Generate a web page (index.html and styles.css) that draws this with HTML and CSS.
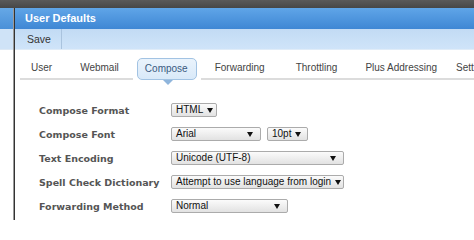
FILE: index.html
```html
<!DOCTYPE html>
<html>
<head>
<meta charset="utf-8">
<link rel="stylesheet" href="styles.css">
</head>
<body>
<div class="topbar"></div>
<div class="desk">
  <div class="backwin">
    <div class="back-title"></div>
    <div class="back-tool"></div>
  </div>
  <div class="win">
    <div class="titlebar">User Defaults</div>
    <div class="toolbar"><span class="tool-btn">Save</span></div>
    <div class="tabs">
      <span class="tab tab-first">User</span>
      <span class="tab">Webmail</span>
      <span class="tab active">Compose</span>
      <span class="tab tab-fwd">Forwarding</span>
      <span class="tab">Throttling</span>
      <span class="tab tab-plus">Plus Addressing</span>
      <span class="tab">Settings</span>
    </div>
    <div class="form">
      <div class="label">Compose Format</div>
      <div class="field"><div class="sel w-html"><span class="sel-text">HTML</span><span class="arrow"></span></div></div>

      <div class="label">Compose Font</div>
      <div class="field"><div class="sel w-arial"><span class="sel-text">Arial</span><span class="arrow"></span></div><div class="sel w-size"><span class="sel-text">10pt</span><span class="arrow"></span></div></div>

      <div class="label">Text Encoding</div>
      <div class="field"><div class="sel w-wide"><span class="sel-text">Unicode (UTF-8)</span><span class="arrow"></span></div></div>

      <div class="label">Spell Check Dictionary</div>
      <div class="field"><div class="sel w-wide"><span class="sel-text">Attempt to use language from login</span><span class="arrow"></span></div></div>

      <div class="label">Forwarding Method</div>
      <div class="field"><div class="sel w-normal"><span class="sel-text">Normal</span><span class="arrow"></span></div></div>
    </div>
  </div>
</div>
</body>
</html>
```
FILE: styles.css
```css
html, body {
  margin: 0;
  padding: 0;
}
body {
  width: 474px;
  height: 220px;
  overflow: hidden;
  background: #ffffff;
  font-family: "Liberation Sans", Arial, sans-serif;
}
.topbar {
  height: 8px;
  background: linear-gradient(#5a5a5a, #474747);
}
.desk {
  display: flex;
  height: 212px;
}
.backwin {
  width: 14px;
  flex: none;
}
.back-title {
  height: 21px;
  background: linear-gradient(#66a8e6, #4a90d8);
}
.back-tool {
  height: 20px;
  background: #cfe3f7;
  border-bottom: 1px solid #dde9f5;
}
.win {
  flex: 1;
  border-left: 1px solid #333333;
  box-shadow: -1px 0 0 #9a9a9a;
  min-width: 0;
  overflow: hidden;
}
.titlebar {
  height: 21px;
  line-height: 21px;
  padding-left: 10px;
  background: linear-gradient(#5fa5e8, #3f87d4);
  color: #ffffff;
  font-weight: bold;
  font-size: 11px;
}
.toolbar {
  height: 20px;
  display: flex;
  background: linear-gradient(#c2dbf4, #cfe4f9);
  border-bottom: 1px solid #e0ecf8;
}
.tool-btn {
  padding: 0 10px 0 12px;
  line-height: 20px;
  font-size: 10.5px;
  color: #333333;
  border-right: 1px solid #a9c3de;
}
.tabs {
  display: flex;
  margin-top: 8px;
  height: 22px;
  padding-left: 5px;
  white-space: nowrap;
}
.tab {
  padding: 0 14px;
  line-height: 20px;
  font-size: 10px;
  color: #444444;
  border-bottom: 2px solid #dcdcdc;
}
.tab-first {
  padding-left: 11px;
}
.tab-fwd {
  padding-right: 17px;
}
.tab-plus {
  padding-right: 5px;
}
.tab.active {
  position: relative;
  margin: 0 4px;
  padding: 0 8px 0 7px;
  border: 1px solid #a2c3e3;
  border-radius: 5px;
  background: linear-gradient(#eaf3fc, #d9e9f9);
  color: #3a5a80;
  line-height: 20px;
}
.tab.active::after {
  content: "";
  position: absolute;
  left: 25px;
  top: 21px;
  border-left: 5px solid transparent;
  border-right: 5px solid transparent;
  border-top: 5px solid #8fb5dc;
}
.form {
  display: grid;
  grid-template-columns: 132px auto;
  grid-auto-rows: 14px;
  row-gap: 10px;
  padding: 23px 0 0 24px;
}
.label {
  align-self: center;
  font-family: "DejaVu Sans", Verdana, sans-serif;
  font-weight: bold;
  font-size: 9.5px;
  color: #555555;
  white-space: nowrap;
}
.field {
  display: flex;
  gap: 6px;
}
.sel {
  box-sizing: border-box;
  height: 14px;
  display: flex;
  align-items: center;
  padding-left: 4px;
  border: 1px solid #ababab;
  border-radius: 2px;
  background: linear-gradient(#fbfbfb, #e2e2e2);
  font-size: 10px;
  color: #111111;
  white-space: nowrap;
}
.sel-text {
  flex: 1;
  line-height: 12px;
}
.arrow {
  flex: none;
  margin-right: 7px;
  margin-left: 4px;
  border-left: 3px solid transparent;
  border-right: 3px solid transparent;
  border-top: 5px solid #111111;
}
.w-html { width: 46px; }
.w-arial { width: 90px; }
.w-size { width: 41px; }
.w-wide { width: 173px; }
.w-normal { width: 117px; }
```
